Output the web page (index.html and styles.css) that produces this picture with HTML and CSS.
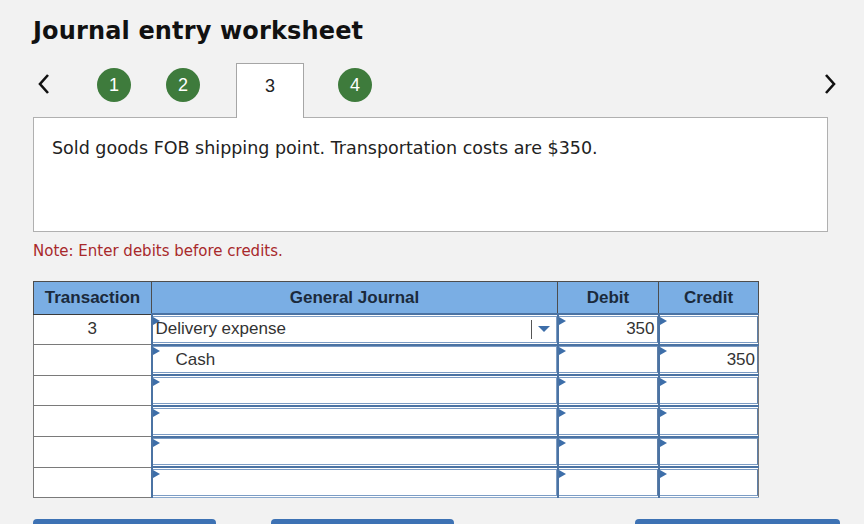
FILE: index.html
```html
<!DOCTYPE html>
<html lang="en">
<head>
<meta charset="utf-8">
<title>Journal entry worksheet</title>
<link rel="stylesheet" href="styles.css">
</head>
<body>
<div class="page">
  <h1 class="title">Journal entry worksheet</h1>
  <div class="nav">
    <span class="arrow arrow-left"><svg width="16" height="22" viewBox="0 0 16 22"><path d="M12 2 L4 11 L12 20" fill="none" stroke="#111" stroke-width="2.6"/></svg></span>
    <span class="step step-1">1</span>
    <span class="step step-2">2</span>
    <span class="tab">3</span>
    <span class="step step-4">4</span>
    <span class="arrow arrow-right"><svg width="16" height="22" viewBox="0 0 16 22"><path d="M4 2 L12 11 L4 20" fill="none" stroke="#111" stroke-width="2.6"/></svg></span>
  </div>
  <div class="prompt">Sold goods FOB shipping point. Transportation costs are $350.</div>
  <p class="note">Note: Enter debits before credits.</p>
  <table class="journal">
    <colgroup>
      <col class="c-tr"><col class="c-gj"><col class="c-dr"><col class="c-cr">
    </colgroup>
    <thead>
      <tr><th>Transaction</th><th>General Journal</th><th>Debit</th><th>Credit</th></tr>
    </thead>
    <tbody>
      <tr>
        <td class="tr">3</td>
        <td class="in"><div class="box gj select"><span class="flag"></span><span class="val">Delivery expense</span><span class="dd"><span class="caret"></span></span></div></td>
        <td class="in"><div class="box num"><span class="flag"></span>350</div></td>
        <td class="in"><div class="box num"><span class="flag"></span></div></td>
      </tr>
      <tr>
        <td class="tr"></td>
        <td class="in"><div class="box gj indent"><span class="flag"></span>Cash</div></td>
        <td class="in"><div class="box num"><span class="flag"></span></div></td>
        <td class="in"><div class="box num"><span class="flag"></span>350</div></td>
      </tr>
      <tr>
        <td class="tr"></td>
        <td class="in"><div class="box gj"><span class="flag"></span></div></td>
        <td class="in"><div class="box num"><span class="flag"></span></div></td>
        <td class="in"><div class="box num"><span class="flag"></span></div></td>
      </tr>
      <tr>
        <td class="tr"></td>
        <td class="in"><div class="box gj"><span class="flag"></span></div></td>
        <td class="in"><div class="box num"><span class="flag"></span></div></td>
        <td class="in"><div class="box num"><span class="flag"></span></div></td>
      </tr>
      <tr>
        <td class="tr"></td>
        <td class="in"><div class="box gj"><span class="flag"></span></div></td>
        <td class="in"><div class="box num"><span class="flag"></span></div></td>
        <td class="in"><div class="box num"><span class="flag"></span></div></td>
      </tr>
      <tr>
        <td class="tr"></td>
        <td class="in"><div class="box gj"><span class="flag"></span></div></td>
        <td class="in"><div class="box num"><span class="flag"></span></div></td>
        <td class="in"><div class="box num"><span class="flag"></span></div></td>
      </tr>
    </tbody>
  </table>
  <div class="buttons">
    <span class="btn btn-a"></span>
    <span class="btn btn-b"></span>
    <span class="btn btn-c"></span>
  </div>
</div>
</body>
</html>
```

FILE: styles.css
```css
html, body {
  margin: 0;
  padding: 0;
  background: #f2f2f2;
  overflow: hidden;
}
.page {
  padding: 15px 0 0 33px;
  width: 795px;
  height: 509px;
  font-family: "DejaVu Sans", Verdana, sans-serif;
  color: #222;
}
.title {
  margin: 0;
  font-size: 24px;
  line-height: 32px;
  font-weight: bold;
  color: #111;
  letter-spacing: 0.15px;
}
.nav {
  display: flex;
  align-items: flex-start;
  height: 54px;
  margin-top: 16px;
}
.arrow {
  display: flex;
  align-items: center;
  margin-top: 10px;
}
.arrow-left { margin-left: 3px; }
.arrow-right { margin-left: auto; margin-right: -10px; }
.step {
  margin-top: 5px;
  width: 34px;
  height: 34px;
  border-radius: 50%;
  background: #3e7b3c;
  color: #fff;
  font-family: "Liberation Sans", Arial, sans-serif;
  font-size: 18px;
  display: flex;
  align-items: center;
  justify-content: center;
}
.step-1 { margin-left: 45px; }
.step-2 { margin-left: 35px; }
.tab {
  align-self: stretch;
  margin-left: 36px;
  width: 66px;
  background: #fff;
  border: 1px solid #a6a6a6;
  border-bottom: none;
  margin-bottom: -1px;
  position: relative;
  z-index: 1;
  display: flex;
  justify-content: center;
  padding-top: 12px;
  font-family: "Liberation Sans", Arial, sans-serif;
  font-size: 18px;
  line-height: 20px;
  color: #222;
}
.step-4 { margin-left: 34px; }
.prompt {
  height: 115px;
  box-sizing: border-box;
  background: #fff;
  border: 1px solid #b0b0b0;
  padding: 20px 0 0 18px;
  font-size: 17.5px;
  line-height: 20px;
  color: #222;
}
.note {
  margin: 9px 0 0 0;
  font-size: 15px;
  line-height: 20px;
  color: #a8292b;
}
.journal {
  margin-top: 20px;
  border-collapse: collapse;
  table-layout: fixed;
  width: 725px;
  font-family: "Liberation Sans", Arial, sans-serif;
  font-size: 17px;
  border: 1px solid #7a7a7a;
}
.c-tr { width: 118px; }
.c-gj { width: 406px; }
.c-dr { width: 101px; }
.c-cr { width: 100px; }
.journal th {
  background: #7aaee4;
  color: #1b2a3c;
  font-weight: bold;
  height: 31px;
  padding: 0;
  border: 1px solid #4d4d4d;
  border-bottom-color: #3a3a3a;
}
.journal td {
  height: 28.67px;
  padding: 0;
}
.journal td.tr {
  background: #fff;
  text-align: center;
  color: #333;
  border: 1px solid #7a7a7a;
}
.journal td.in {
  background: #fff;
  border-left: 2px solid #4b73a3;
  border-top: 2px solid #4b73a3;
  border-bottom: 1px solid #8aa8cc;
}
.box {
  position: relative;
  height: 27px;
  box-sizing: border-box;
  border: 1px solid #7c9cc4;
  border-left-width: 0;
  display: flex;
  align-items: center;
  color: #333;
}
.box.gj { padding-left: 3px; }
.box.indent { padding-left: 23px; }
.box.num {
  justify-content: flex-end;
  padding-right: 2px;
  border-right: 1px solid #5d7ea8;
}
.flag {
  position: absolute;
  left: 0;
  top: 0;
  width: 0;
  height: 0;
  border-top: 4px solid transparent;
  border-bottom: 4px solid transparent;
  border-left: 7px solid #3d6ea9;
}
.val { flex: 1; }
.dd {
  width: 24px;
  align-self: stretch;
  border-left: 1px solid #555;
  margin: 3px 0;
  display: flex;
  align-items: center;
  justify-content: center;
}
.caret {
  width: 0;
  height: 0;
  border-left: 6px solid transparent;
  border-right: 6px solid transparent;
  border-top: 6px solid #3d6ea9;
}
.buttons {
  display: flex;
  margin-top: 21px;
}
.btn {
  flex-shrink: 0;
  height: 30px;
  background: #3d72b4;
  border-radius: 4px 4px 0 0;
}
.btn-a { width: 183px; }
.btn-b { width: 183px; margin-left: 55px; }
.btn-c { width: 205px; margin-left: 181px; }
```
